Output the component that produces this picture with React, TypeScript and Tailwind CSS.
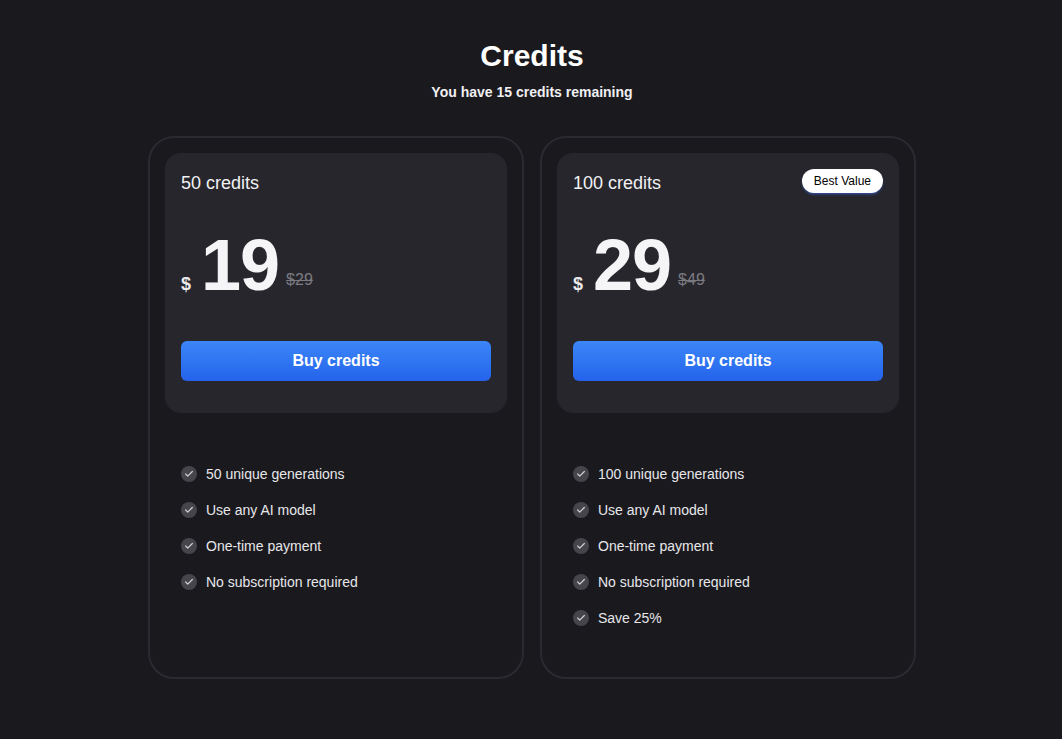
import { Check } from "lucide-react";

type Plan = {
  id: string;
  credits: string;
  price: string;
  oldPrice: string;
  badge?: string;
  features: string[];
};

const plans: Plan[] = [
  {
    id: "starter",
    credits: "50 credits",
    price: "19",
    oldPrice: "$29",
    features: ["50 unique generations", "Use any AI model", "One-time payment", "No subscription required"],
  },
  {
    id: "value",
    credits: "100 credits",
    price: "29",
    oldPrice: "$49",
    badge: "Best Value",
    features: [
      "100 unique generations",
      "Use any AI model",
      "One-time payment",
      "No subscription required",
      "Save 25%",
    ],
  },
];

const PlanCard = ({ plan }: { plan: Plan }) => {
  return (
    <div className="rounded-[26px] border-2 border-[#2b2a30] p-[15px] pb-[49px]">
      <div className="rounded-2xl bg-[#27262c] px-4 pt-4 pb-8">
        <div className="flex items-start justify-between">
          <h3 className="text-lg leading-7 text-[#f1f1f3]">{plan.credits}</h3>
          {plan.badge && (
            <span className="rounded-full bg-white px-3 h-6 flex items-center text-xs text-black shadow-[0_2px_3px_-1px_rgba(59,110,246,0.7)]">
              {plan.badge}
            </span>
          )}
        </div>
        <div className="mt-8 flex items-end">
          <span className="mb-2 text-lg font-bold leading-none text-[#e9e9ec]">$</span>
          <span className="ml-[10px] text-7xl font-bold leading-none tracking-[-1px] text-[#f5f5f7]">
            {plan.price}
          </span>
          <span className="mb-[13px] ml-[7px] text-base leading-none text-[#7b7a81] line-through">
            {plan.oldPrice}
          </span>
        </div>
        <button className="mt-10 flex h-10 w-full items-center justify-center rounded-md bg-linear-to-b from-[#3c86f7] to-[#2563eb] text-base font-bold text-white">
          Buy credits
        </button>
      </div>
      <ul className="mt-[51px] flex flex-col gap-4 px-4">
        {plan.features.map((f) => (
          <li key={f} className="flex h-5 items-center gap-[9px] text-sm text-[#e7e7ea]">
            <span className="flex h-4 w-4 items-center justify-center rounded-full bg-[#46454b]">
              <Check className="h-2.5 w-2.5 text-[#cfcfd3]" strokeWidth={3} />
            </span>
            {f}
          </li>
        ))}
      </ul>
    </div>
  );
};

const App = () => {
  return (
    <div className="min-h-screen bg-[#1a191e] pl-[2px] pt-[38px] font-['Liberation_Sans',Arial,sans-serif]">
      <div className="text-center">
        <h1 className="text-3xl font-bold text-white">Credits</h1>
        <p className="mt-2 text-sm font-bold text-[#f0f0f2]">You have 15 credits remaining</p>
      </div>
      <div className="mx-auto mt-[34px] grid w-[768px] grid-cols-2 gap-4">
        {plans.map((p) => (
          <PlanCard key={p.id} plan={p} />
        ))}
      </div>
    </div>
  );
};

export default App;
